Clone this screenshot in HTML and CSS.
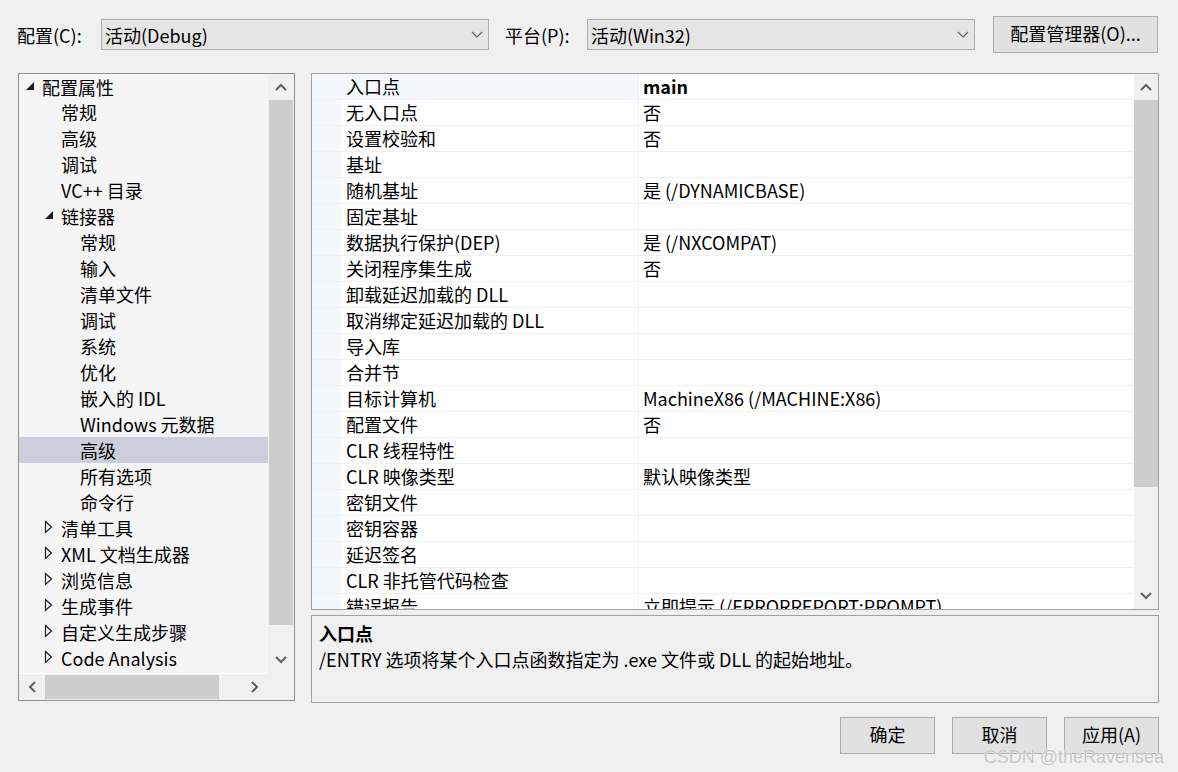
FILE: index.html
```
<!DOCTYPE html>
<html>
<head>
  <meta charset="utf-8">
  <title>属性页</title>
  <link rel="stylesheet" href="styles.css">
</head>
<body>
  <div class="dialog">
    <div class="topbar">
      <span class="label lbl-config">配置(C):</span>
      <div class="combo">
        <span>活动(Debug)</span>
        <svg class="drop" width="12" height="8" viewBox="0 0 12 8"><polyline points="1,1 6,6 11,1" fill="none" stroke="#606060" stroke-width="1.2"/></svg>
      </div>
      <span class="label lbl-platform">平台(P):</span>
      <div class="combo">
        <span>活动(Win32)</span>
        <svg class="drop" width="12" height="8" viewBox="0 0 12 8"><polyline points="1,1 6,6 11,1" fill="none" stroke="#606060" stroke-width="1.2"/></svg>
      </div>
      <button type="button" class="btn btn-manager">配置管理器(O)...</button>
    </div>

    <div class="main">
      <div class="tree-panel">
        <div class="tree">
          <div class="node lvl0"><span class="tog"><svg width="10" height="10" viewBox="0 0 10 10"><polygon points="9,1 9,9 1,9" fill="#1e1e1e"/></svg></span>配置属性</div>
          <div class="node lvl1"><span class="tog"></span>常规</div>
          <div class="node lvl1"><span class="tog"></span>高级</div>
          <div class="node lvl1"><span class="tog"></span>调试</div>
          <div class="node lvl1"><span class="tog"></span>VC++ 目录</div>
          <div class="node lvl1"><span class="tog"><svg width="10" height="10" viewBox="0 0 10 10"><polygon points="9,1 9,9 1,9" fill="#1e1e1e"/></svg></span>链接器</div>
          <div class="node lvl2"><span class="tog"></span>常规</div>
          <div class="node lvl2"><span class="tog"></span>输入</div>
          <div class="node lvl2"><span class="tog"></span>清单文件</div>
          <div class="node lvl2"><span class="tog"></span>调试</div>
          <div class="node lvl2"><span class="tog"></span>系统</div>
          <div class="node lvl2"><span class="tog"></span>优化</div>
          <div class="node lvl2"><span class="tog"></span>嵌入的 IDL</div>
          <div class="node lvl2"><span class="tog"></span>Windows 元数据</div>
          <div class="node lvl2 selected"><span class="tog"></span>高级</div>
          <div class="node lvl2"><span class="tog"></span>所有选项</div>
          <div class="node lvl2"><span class="tog"></span>命令行</div>
          <div class="node lvl1"><span class="tog"><svg width="9" height="14" viewBox="0 0 9 14"><polygon points="1.5,1.5 7.5,7 1.5,12.5" fill="none" stroke="#1e1e1e" stroke-width="1.2"/></svg></span>清单工具</div>
          <div class="node lvl1"><span class="tog"><svg width="9" height="14" viewBox="0 0 9 14"><polygon points="1.5,1.5 7.5,7 1.5,12.5" fill="none" stroke="#1e1e1e" stroke-width="1.2"/></svg></span>XML 文档生成器</div>
          <div class="node lvl1"><span class="tog"><svg width="9" height="14" viewBox="0 0 9 14"><polygon points="1.5,1.5 7.5,7 1.5,12.5" fill="none" stroke="#1e1e1e" stroke-width="1.2"/></svg></span>浏览信息</div>
          <div class="node lvl1"><span class="tog"><svg width="9" height="14" viewBox="0 0 9 14"><polygon points="1.5,1.5 7.5,7 1.5,12.5" fill="none" stroke="#1e1e1e" stroke-width="1.2"/></svg></span>生成事件</div>
          <div class="node lvl1"><span class="tog"><svg width="9" height="14" viewBox="0 0 9 14"><polygon points="1.5,1.5 7.5,7 1.5,12.5" fill="none" stroke="#1e1e1e" stroke-width="1.2"/></svg></span>自定义生成步骤</div>
          <div class="node lvl1"><span class="tog"><svg width="9" height="14" viewBox="0 0 9 14"><polygon points="1.5,1.5 7.5,7 1.5,12.5" fill="none" stroke="#1e1e1e" stroke-width="1.2"/></svg></span>Code Analysis</div>
        </div>
        <div class="vscroll tree-vscroll">
          <div class="arrow"><svg width="12" height="8" viewBox="0 0 12 8"><polyline points="1,7 6,2 11,7" fill="none" stroke="#606060" stroke-width="2"/></svg></div>
          <div class="track"><div class="thumb tree-thumb"></div></div>
          <div class="arrow"><svg width="12" height="8" viewBox="0 0 12 8"><polyline points="1,1 6,6 11,1" fill="none" stroke="#606060" stroke-width="2"/></svg></div>
        </div>
        <div class="hscroll">
          <div class="harrow"><svg width="8" height="12" viewBox="0 0 8 12"><polyline points="7,1 2,6 7,11" fill="none" stroke="#606060" stroke-width="2"/></svg></div>
          <div class="htrack"><div class="hthumb"></div></div>
          <div class="harrow"><svg width="8" height="12" viewBox="0 0 8 12"><polyline points="1,1 6,6 1,11" fill="none" stroke="#606060" stroke-width="2"/></svg></div>
        </div>
        <div class="corner"></div>
      </div>

      <div class="right">
        <div class="grid-box">
          <div class="rows">
            <div class="prow current"><span class="gut"></span><span class="pname">入口点</span><span class="pval bold">main</span></div>
            <div class="prow"><span class="gut"></span><span class="pname">无入口点</span><span class="pval">否</span></div>
            <div class="prow"><span class="gut"></span><span class="pname">设置校验和</span><span class="pval">否</span></div>
            <div class="prow"><span class="gut"></span><span class="pname">基址</span><span class="pval"></span></div>
            <div class="prow"><span class="gut"></span><span class="pname">随机基址</span><span class="pval">是 (/DYNAMICBASE)</span></div>
            <div class="prow"><span class="gut"></span><span class="pname">固定基址</span><span class="pval"></span></div>
            <div class="prow"><span class="gut"></span><span class="pname">数据执行保护(DEP)</span><span class="pval">是 (/NXCOMPAT)</span></div>
            <div class="prow"><span class="gut"></span><span class="pname">关闭程序集生成</span><span class="pval">否</span></div>
            <div class="prow"><span class="gut"></span><span class="pname">卸载延迟加载的 DLL</span><span class="pval"></span></div>
            <div class="prow"><span class="gut"></span><span class="pname">取消绑定延迟加载的 DLL</span><span class="pval"></span></div>
            <div class="prow"><span class="gut"></span><span class="pname">导入库</span><span class="pval"></span></div>
            <div class="prow"><span class="gut"></span><span class="pname">合并节</span><span class="pval"></span></div>
            <div class="prow"><span class="gut"></span><span class="pname">目标计算机</span><span class="pval">MachineX86 (/MACHINE:X86)</span></div>
            <div class="prow"><span class="gut"></span><span class="pname">配置文件</span><span class="pval">否</span></div>
            <div class="prow"><span class="gut"></span><span class="pname">CLR 线程特性</span><span class="pval"></span></div>
            <div class="prow"><span class="gut"></span><span class="pname">CLR 映像类型</span><span class="pval">默认映像类型</span></div>
            <div class="prow"><span class="gut"></span><span class="pname">密钥文件</span><span class="pval"></span></div>
            <div class="prow"><span class="gut"></span><span class="pname">密钥容器</span><span class="pval"></span></div>
            <div class="prow"><span class="gut"></span><span class="pname">延迟签名</span><span class="pval"></span></div>
            <div class="prow"><span class="gut"></span><span class="pname">CLR 非托管代码检查</span><span class="pval"></span></div>
            <div class="prow"><span class="gut"></span><span class="pname">错误报告</span><span class="pval">立即提示 (/ERRORREPORT:PROMPT)</span></div>
          </div>
          <div class="vscroll grid-vscroll">
            <div class="arrow"><svg width="12" height="8" viewBox="0 0 12 8"><polyline points="1,7 6,2 11,7" fill="none" stroke="#606060" stroke-width="2"/></svg></div>
            <div class="track"><div class="thumb grid-thumb"></div></div>
            <div class="arrow"><svg width="12" height="8" viewBox="0 0 12 8"><polyline points="1,1 6,6 11,1" fill="none" stroke="#606060" stroke-width="2"/></svg></div>
          </div>
        </div>
        <div class="desc">
          <div class="desc-title">入口点</div>
          <div class="desc-text">/ENTRY 选项将某个入口点函数指定为 .exe 文件或 DLL 的起始地址。</div>
        </div>
      </div>
    </div>

    <div class="actions">
      <button type="button" class="btn">确定</button>
      <button type="button" class="btn">取消</button>
      <button type="button" class="btn">应用(A)</button>
    </div>
  </div>
  <div class="watermark">CSDN @theRavensea</div>
</body>
</html>
```

FILE: styles.css
```
html, body {
  margin: 0;
  padding: 0;
}

body {
  width: 1178px;
  height: 772px;
  background-color: #f0f0f0;
  font-family: "Noto Sans CJK SC", "Noto Sans", sans-serif;
  font-size: 18px;
  color: #000;
  position: relative;
  overflow: hidden;
}

.dialog {
  display: flex;
  flex-direction: column;
}

/* top row */
.topbar {
  display: flex;
  align-items: center;
  height: 37px;
  margin-top: 16px;
  padding-left: 17px;
}

.label {
  line-height: 26px;
}

.lbl-config {
  width: 84px;
}

.lbl-platform {
  width: 82px;
  margin-left: 16px;
}

.combo {
  width: 388px;
  height: 31px;
  box-sizing: border-box;
  border: 1px solid #adadad;
  background-color: #e5e5e5;
  display: flex;
  align-items: center;
  justify-content: space-between;
  padding: 0 4px 0 3px;
  line-height: 26px;
}

.drop {
  margin-right: 1px;
}

.btn {
  font-family: inherit;
  font-size: 18px;
  color: #000;
  background-color: #e1e1e1;
  border: 1px solid #adadad;
  border-radius: 0;
  padding: 0 0 3px 0;
  height: 37px;
  width: 95px;
  line-height: 24px;
}

.btn-manager {
  width: 165px;
  margin-left: 18px;
}

/* main area */
.main {
  display: flex;
  margin-top: 20px;
  padding-left: 18px;
}

.tree-panel {
  width: 277px;
  height: 628px;
  box-sizing: border-box;
  border: 1px solid #8f8f8f;
  display: grid;
  grid-template-columns: 1fr 26px;
  grid-template-rows: 1fr 27px;
}

.tree {
  background-color: #f5f5f5;
  overflow: hidden;
}

.node {
  height: 26px;
  line-height: 24px;
  display: flex;
  align-items: center;
  white-space: nowrap;
}

.node:first-child {
  height: 25px;
}

.node.selected {
  background-color: #cccedb;
}

.tog {
  width: 17px;
  flex-shrink: 0;
  display: flex;
  align-items: center;
}

.lvl0 { padding-left: 6px; }
.lvl1 { padding-left: 25px; }
.lvl2 { padding-left: 44px; }

.lvl0 .tog svg,
.lvl1 .tog svg {
  margin-top: -2px;
}

/* scrollbars */
.vscroll {
  display: flex;
  flex-direction: column;
  background-color: #f0f0f0;
}

.arrow {
  height: 26px;
  flex-shrink: 0;
  display: flex;
  align-items: center;
  justify-content: center;
}

.track {
  flex: 1;
  position: relative;
}

.thumb {
  background-color: #cdcdcd;
}

.tree-vscroll .track {
  padding: 0 1px;
}

.tree-thumb {
  height: 525px;
}

.grid-thumb {
  height: 387px;
}

.hscroll {
  display: flex;
  background-color: #f0f0f0;
  border-top: 1px solid #fff;
}

.harrow {
  width: 26px;
  flex-shrink: 0;
  display: flex;
  align-items: center;
  justify-content: center;
}

.htrack {
  flex: 1;
  padding: 1px 0;
}

.hthumb {
  width: 174px;
  height: 100%;
  background-color: #cdcdcd;
}

.corner {
  background-color: #f0f0f0;
}

/* property grid */
.right {
  display: flex;
  flex-direction: column;
  margin-left: 16px;
  width: 848px;
}

.grid-box {
  height: 537px;
  box-sizing: border-box;
  border: 1px solid #a0a0a0;
  display: flex;
}

.rows {
  flex: 1;
  overflow: hidden;
  background-color: #fff;
}

.prow {
  display: flex;
  height: 26px;
  box-sizing: border-box;
  line-height: 24px;
  border-bottom: 1px solid #f0f0f7;
  white-space: nowrap;
}

.gut {
  width: 29px;
  flex-shrink: 0;
  background-color: #f4f7fc;
}

.pname {
  width: 298px;
  flex-shrink: 0;
  padding-left: 5px;
  box-sizing: border-box;
  border-right: 1px solid #f0f0f7;
}

.prow.current .pname {
  background-color: #f4f7fc;
}

.pval {
  flex: 1;
  padding-left: 4px;
}

.bold {
  font-weight: bold;
}

.grid-vscroll {
  width: 24px;
  flex-shrink: 0;
}

.desc {
  margin-top: 5px;
  height: 88px;
  box-sizing: border-box;
  border: 1px solid #a0a0a0;
  padding: 4px 7px;
}

.desc-title {
  font-weight: bold;
  line-height: 26px;
}

.desc-text {
  line-height: 27px;
}

/* bottom buttons */
.actions {
  display: flex;
  justify-content: flex-end;
  gap: 17px;
  margin-top: 14px;
  padding-right: 19px;
}

.watermark {
  position: absolute;
  right: 14px;
  top: 747px;
  font-family: "Liberation Sans", sans-serif;
  font-size: 18px;
  color: #c4c4c4;
  text-shadow: 0 0 1px #fff, 0 0 1px #fff;
}
```
